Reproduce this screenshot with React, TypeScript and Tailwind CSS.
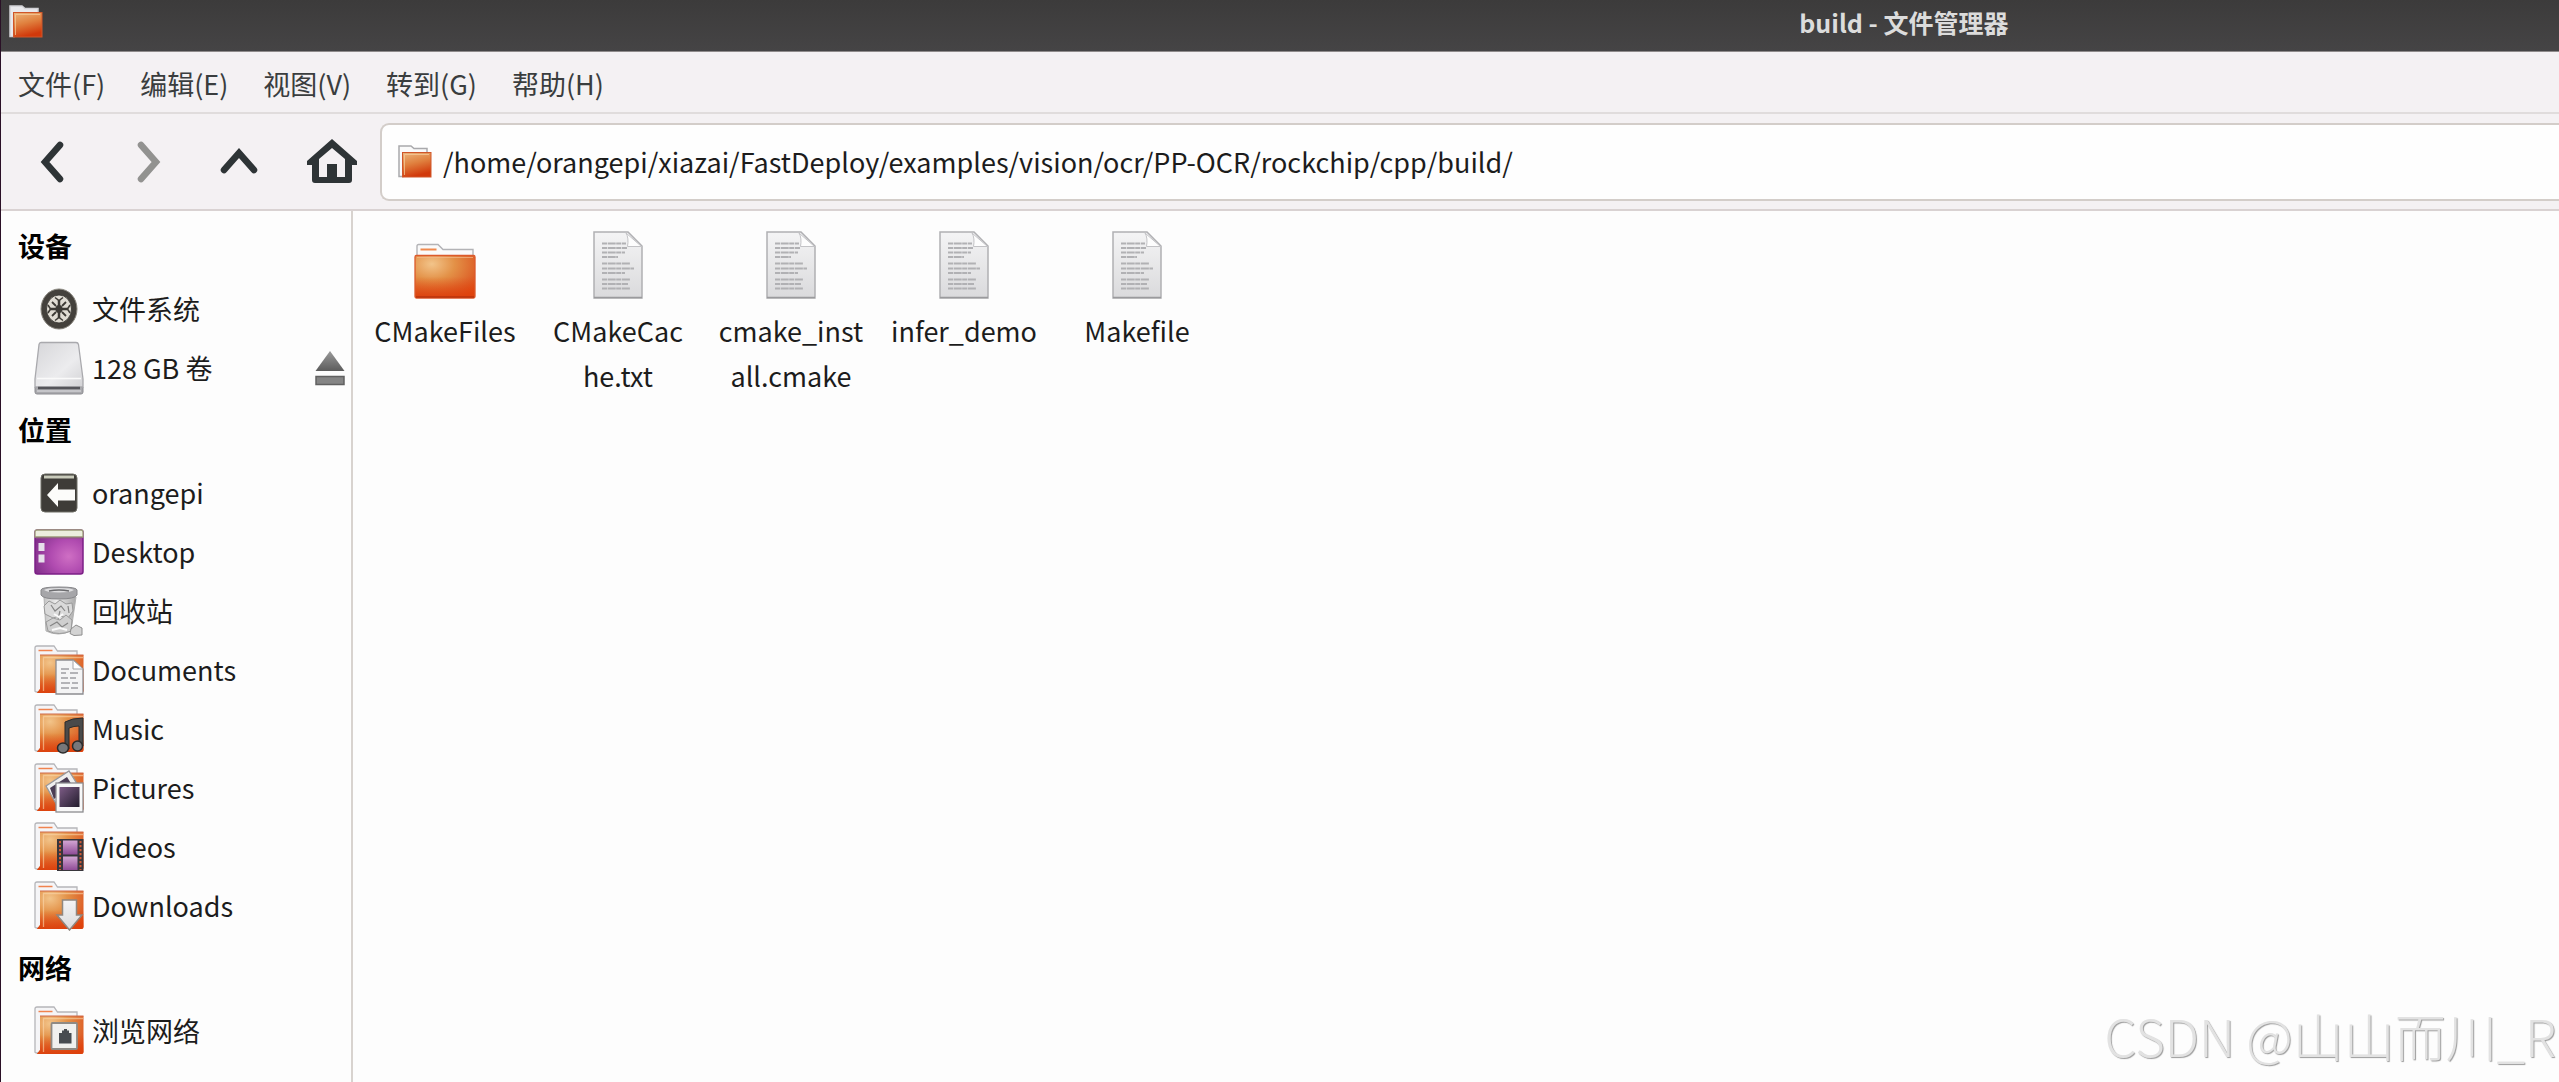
import React from "react";

const FONT = "font-['Noto_Sans_CJK_SC','Noto_Sans',sans-serif]";

function Defs() {
  return (
    <svg width="0" height="0" className="absolute" aria-hidden="true">
      <defs>
        <linearGradient id="small-front" x1="0" y1="0" x2="0.3" y2="1">
          <stop offset="0" stopColor="#ecb57c" />
          <stop offset="0.5" stopColor="#e0813f" />
          <stop offset="1" stopColor="#d1390b" />
        </linearGradient>
        <radialGradient id="front" cx="0.28" cy="0.2" r="0.95">
          <stop offset="0" stopColor="#f2c48a" />
          <stop offset="0.4" stopColor="#e39147" />
          <stop offset="0.8" stopColor="#dd5f27" />
          <stop offset="1" stopColor="#e2470f" />
        </radialGradient>
        <linearGradient id="front-shade" x1="0" y1="0" x2="0" y2="1">
          <stop offset="0.5" stopColor="#e2470f" stopOpacity="0" />
          <stop offset="1" stopColor="#dc400c" stopOpacity="0.9" />
        </linearGradient>
        <linearGradient id="paper" x1="0" y1="0" x2="0" y2="1">
          <stop offset="0" stopColor="#f4f4f5" />
          <stop offset="1" stopColor="#dadadc" />
        </linearGradient>
        <linearGradient id="metal" x1="0" y1="0" x2="1" y2="1">
          <stop offset="0" stopColor="#d6d6d9" />
          <stop offset="0.6" stopColor="#ececee" />
          <stop offset="1" stopColor="#d2d2d5" />
        </linearGradient>
        <linearGradient id="eject" x1="0" y1="0" x2="0" y2="1">
          <stop offset="0" stopColor="#9a9a9a" />
          <stop offset="1" stopColor="#5c5c5c" />
        </linearGradient>
        <radialGradient id="desk" cx="0.7" cy="0.6" r="0.75">
          <stop offset="0" stopColor="#cf6fc4" />
          <stop offset="0.5" stopColor="#b04bb0" />
          <stop offset="1" stopColor="#83308c" />
        </radialGradient>
        <linearGradient id="film" x1="0" y1="0" x2="0" y2="1">
          <stop offset="0" stopColor="#d3a6d4" />
          <stop offset="1" stopColor="#8f4c97" />
        </linearGradient>
        <linearGradient id="photo" x1="0" y1="0" x2="1" y2="1">
          <stop offset="0" stopColor="#7d5c86" />
          <stop offset="1" stopColor="#221c2c" />
        </linearGradient>
        <linearGradient id="glass" x1="0" y1="0" x2="1" y2="0">
          <stop offset="0" stopColor="#c4c4c4" />
          <stop offset="0.4" stopColor="#ececec" />
          <stop offset="1" stopColor="#a9a9a9" />
        </linearGradient>
      </defs>
    </svg>
  );
}

function SmallFolder({ dark = false }: { dark?: boolean }) {
  return (
    <svg viewBox="0 0 34 33" className="h-[33px] w-[34px] shrink-0" aria-hidden="true">
      <path
        d="M1 1h12l3 2.500h13v5H5v23H1z"
        fill={dark ? "#e9e9ec" : "#fafafa"}
        stroke={dark ? "#d2d2d6" : "#a9a9ac"}
        strokeWidth="1.500"
      />
      <rect x="4.500" y="7.500" width="28.500" height="24.500" fill="url(#small-front)" stroke="#d0562a" />
      <path d="M6.500 30V9.500H31" fill="none" stroke="#f6cfa0" strokeOpacity="0.7" />
    </svg>
  );
}

function FolderBase({ children }: { children?: React.ReactNode }) {
  return (
    <svg viewBox="0 0 50 50" className="size-[50px]" aria-hidden="true">
      <path d="M1 46V3q0-2 2-2h17l3.500 5H43v6H7v35H3q-2 0-2-1z" fill="#f5f5f7" stroke="#b5b5b9" strokeWidth="1.300" />
      <path d="M4.500 5.500h14" stroke="#f0834f" strokeWidth="1.500" />
      <path d="M6 10h43.500v36q0 2-2 2H3l3-4z" fill="url(#front)" />
      <path d="M6 10h43.500v36q0 2-2 2H3l3-4z" fill="url(#front-shade)" />
      <path d="M6 10h43.500" stroke="#cf6a4a" />
      <path d="M9.500 46V12.500H49" fill="none" stroke="#fbd9ae" strokeOpacity="0.6" strokeWidth="1.300" />
      {children}
    </svg>
  );
}

function FilesystemIcon() {
  return (
    <svg viewBox="0 0 38 42" className="h-[42px] w-[38px]" aria-hidden="true">
      <ellipse cx="19" cy="21" rx="18" ry="20" fill="#44413c" stroke="#8a877f" strokeWidth="1" />
      <ellipse cx="19" cy="21" rx="12.500" ry="14" fill="#e0dcd3" stroke="#2f2d29" strokeWidth="0.800" />
      <g stroke="#3d3a35">
        <path d="M19 12v18M10 21h18" strokeWidth="2.500" />
        <path d="M12 14l4 4M26 14l-4 4M12 28l4-4M26 28l-4-4" strokeWidth="1.800" />
        <path d="M15 9.500l4 3 4-3M15 32.500l4-3 4 3M8 17l2.500 4L8 25M30 17l-2.500 4 2.500 4" fill="none" strokeWidth="1.500" />
      </g>
      <ellipse cx="19" cy="21" rx="3.500" ry="4" fill="#3d3a35" />
    </svg>
  );
}

function DriveIcon() {
  return (
    <svg viewBox="0 0 50 54" className="h-[54px] w-[50px]" aria-hidden="true">
      <path d="M1 46h48v5q0 2-2 2H3q-2 0-2-2z" fill="#a9a9ad" stroke="#8b8b90" />
      <path d="M7 1.500h35q2 0 2.500 2L49 38v8H1v-8L5 3.500q.4-2 2-2z" fill="url(#metal)" stroke="#a9a9ad" strokeWidth="1.300" />
      <path d="M3 37.500h44" stroke="#fafafa" strokeWidth="1.300" />
      <path d="M4 47h42" stroke="#55555a" strokeWidth="2.500" />
      <path d="M3 50h44" stroke="#cfcfd3" strokeWidth="1.500" />
    </svg>
  );
}

function HomeFolderIcon() {
  return (
    <svg viewBox="0 0 38 40" className="h-[40px] w-[38px]" aria-hidden="true">
      <rect x="1" y="1" width="36" height="38" rx="4" fill="#3e3c38" stroke="#6f6e66" />
      <path d="M4 4h30" stroke="#c9cbbb" strokeWidth="3" />
      <path d="M7 22l11-12v6.500h17v11H18V34z" fill="#fcfcfa" />
    </svg>
  );
}

function DesktopIcon() {
  return (
    <svg viewBox="0 0 50 46" className="h-[46px] w-[50px]" aria-hidden="true">
      <rect x="1" y="1" width="48" height="44" rx="2.500" fill="url(#desk)" stroke="#7c1f86" strokeWidth="1.500" />
      <path d="M1 8V3q0-2 2-2h44q2 0 2 2v5z" fill="#eceedd" stroke="#9b9c78" strokeWidth="1.300" />
      <path d="M2 9h46" stroke="#8c5f7c" />
      <rect x="4.500" y="14" width="6" height="8" fill="#e6dfea" />
      <rect x="4.500" y="25.500" width="6" height="8" fill="#e6dfea" />
    </svg>
  );
}

function TrashIcon() {
  return (
    <svg viewBox="-6 0 50 50" className="size-[50px]" aria-hidden="true">
      <path d="M4 11l2 34q12 6 25 0l5-34z" fill="url(#glass)" stroke="#b2b2b2" />
      <path d="M4 20l5-5 6 3 5-4 6 4 6-1 1 8-5 7-8-2-7 2-8-4z" fill="#dadada" stroke="#999" />
      <path d="M6 36l7-4 7 2 6-5 6 5-1 11q-12 5-23 0z" fill="#cfcfcf" stroke="#9a9a9a" />
      <path d="M11 19l4 6 6-5 4 5M10 40l7-4 5 5 6-4M20 25l-2 8M28 20l1 7" fill="none" stroke="#858585" strokeWidth="1.200" />
      <path d="M14 28l5 3 4-3M12 44l8-2 7 2" fill="none" stroke="#fafafa" strokeWidth="2" />
      <path d="M1 4q0-3 18-3t18 3v5q-2 4-18 4T1 9z" fill="#a6a6a9" stroke="#87878a" />
      <path d="M4 4q2-2 15-2t15 2q-3 2.500-15 2.500T4 4z" fill="#dedee0" />
      <path d="M9 5q10-2 20 0" stroke="#6b6b6e" fill="none" strokeWidth="1.500" />
      <path d="M31 43l5-4 6 3v7l-8 .500-4-2z" fill="#d3d3d3" stroke="#8d8d8d" />
    </svg>
  );
}

function DocumentsIcon() {
  return (
    <FolderBase>
      <path d="M22 15h17l10 9v25H22z" fill="#f4f4f5" stroke="#8c8c90" strokeWidth="1.300" />
      <path d="M39 15v9h10z" fill="#fff" stroke="#a2a2a6" />
      <path d="M27 24h8M27 28h5M36 28h8M27 33h7M36 33h6M27 38h9M38 38h6M27 43h8M37 43h7" stroke="#9d9da2" strokeWidth="1.300" />
    </FolderBase>
  );
}

function MusicIcon() {
  return (
    <FolderBase>
      <path d="M31 18q7-4 18-4v28h-4V22q-5 0-10 2v21h-4z" fill="#4a4a4a" stroke="#2b2b2b" />
      <ellipse cx="29" cy="44" rx="5.500" ry="5" fill="#77777a" stroke="#2b2b2b" strokeWidth="1.500" />
      <ellipse cx="43.500" cy="42" rx="5" ry="5" fill="#77777a" stroke="#2b2b2b" strokeWidth="1.500" />
    </FolderBase>
  );
}

function PicturesIcon() {
  return (
    <FolderBase>
      <path d="M12 23L35 8l10 16-21 20z" fill="#efefef" stroke="#98989c" strokeWidth="1.300" />
      <path d="M16 25l17-11 5 8-18 14z" fill="#4b3d54" />
      <rect x="22" y="20" width="27" height="29" fill="#f8f8f8" stroke="#8c8c90" strokeWidth="1.300" />
      <rect x="25.500" y="24" width="20" height="20" fill="url(#photo)" />
    </FolderBase>
  );
}

function VideosIcon() {
  return (
    <FolderBase>
      <rect x="23" y="17" width="26.500" height="32" fill="#38363c" />
      <rect x="29" y="18.500" width="14.500" height="14" fill="url(#film)" />
      <rect x="29" y="34.500" width="14.500" height="13.500" fill="url(#film)" />
      <path d="M26 19v29M46.500 19v29" stroke="#cf5a35" strokeWidth="2" strokeDasharray="2.200 1.800" />
    </FolderBase>
  );
}

function DownloadsIcon() {
  return (
    <FolderBase>
      <path d="M28.500 19h14v15H48L35.500 49 23 34h5.500z" fill="url(#paper)" stroke="#8f8780" strokeWidth="1.500" />
    </FolderBase>
  );
}

function NetworkIcon() {
  return (
    <FolderBase>
      <rect x="17.500" y="17" width="25.500" height="26" rx="1" fill="#f0f0ee" stroke="#8f8a84" strokeWidth="1.800" />
      <path d="M25 27h3v-2.500h2V23h3v1.500h2V27h2.500v10.500H25z" fill="#474b50" />
    </FolderBase>
  );
}

function BigFolderIcon() {
  return (
    <svg viewBox="0 0 62 56" className="h-[56px] w-[62px]" aria-hidden="true">
      <path d="M3 13V3q0-1.500 1.500-1.500H24L29 6.500h30V14" fill="#fafafa" stroke="#b3b3b6" strokeWidth="1.400" />
      <path d="M6.500 6.500h16" stroke="#f08a4f" strokeWidth="2" />
      <rect x="1" y="12.500" width="60" height="42.500" rx="1.500" fill="url(#front)" />
      <rect x="1" y="12.500" width="60" height="42.500" rx="1.500" fill="url(#front-shade)" stroke="#dc5a2c" strokeWidth="1.300" />
      <path d="M3 14.500h56" stroke="#f3b98d" strokeOpacity="0.7" />
      <path d="M2 54h58" stroke="#b8330d" strokeWidth="1.500" />
    </svg>
  );
}

function TextFileIcon() {
  return (
    <svg viewBox="0 0 50 68" className="h-[68px] w-[50px]" aria-hidden="true">
      <path d="M1 1h34l14 14v52H1z" fill="url(#paper)" stroke="#b0b0b3" strokeWidth="1.500" />
      <path d="M1 66.500h48" stroke="#9a9a9d" strokeWidth="1.500" />
      <path d="M33 2q3 5 1.500 13.500H48.500z" fill="#fdfdfd" stroke="#c3c3c6" />
      <path
        d="M9 12.500h24M9 17h25M9 21.500h23M9 26h16M9 32.500h28M9 37.500h32M9 42h23M9 48.500h28M9 53h26M9 57.500h28"
        stroke="#b1b1b4"
        strokeWidth="1.800"
        strokeDasharray="5 0.700 8 0.500"
      />
    </svg>
  );
}

const menus = ["文件(F)", "编辑(E)", "视图(V)", "转到(G)", "帮助(H)"];

type Place = { label: string; icon: React.ReactNode; eject?: boolean };

const sections: { title: string; places: Place[] }[] = [
  {
    title: "设备",
    places: [
      { label: "文件系统", icon: <FilesystemIcon /> },
      { label: "128 GB 卷", icon: <DriveIcon />, eject: true },
    ],
  },
  {
    title: "位置",
    places: [
      { label: "orangepi", icon: <HomeFolderIcon /> },
      { label: "Desktop", icon: <DesktopIcon /> },
      { label: "回收站", icon: <TrashIcon /> },
      { label: "Documents", icon: <DocumentsIcon /> },
      { label: "Music", icon: <MusicIcon /> },
      { label: "Pictures", icon: <PicturesIcon /> },
      { label: "Videos", icon: <VideosIcon /> },
      { label: "Downloads", icon: <DownloadsIcon /> },
    ],
  },
  { title: "网络", places: [{ label: "浏览网络", icon: <NetworkIcon /> }] },
];

// Each name is given in parts; a long name may wrap between them.
const files: { parts: string[]; folder?: boolean }[] = [
  { parts: ["CMakeFiles"], folder: true },
  { parts: ["CMakeCac", "he.txt"] },
  { parts: ["cmake_inst", "all.cmake"] },
  { parts: ["infer_demo"] },
  { parts: ["Makefile"] },
];

function NavButton({ label, disabled, children }: { label: string; disabled?: boolean; children: React.ReactNode }) {
  return (
    <button
      type="button"
      aria-label={label}
      disabled={disabled}
      className="flex h-full w-[93px] items-center justify-center text-[#2e3436] disabled:text-[#929290]"
    >
      <svg viewBox="0 0 52 46" className="h-[46px] w-[52px]" fill="none" stroke="currentColor" strokeWidth="6.500" aria-hidden="true">
        {children}
      </svg>
    </button>
  );
}

export default function App() {
  return (
    <div className={`${FONT} relative flex min-h-screen flex-col overflow-hidden border-l border-[#2a1026] bg-[#fdfdfd] text-[27px] text-[#1c1c1c]`}>
      <Defs />
      <header className="grid h-[52px] grid-cols-[703fr_297fr] items-center border-b border-[#8f8b8b] bg-linear-to-b from-[#3c3b3b] to-[#454445]">
        <div className="flex pb-2 pl-2">
          <SmallFolder dark />
        </div>
        <h1 className="pb-2 text-[25px] leading-9 font-bold text-[#dcdcdc]">build - 文件管理器</h1>
      </header>

      <nav className="flex h-[62px] items-center gap-[35px] border-b-2 border-[#e0dcdc] bg-[#f4f1f3] pl-[17px] pt-1 text-[#3a3d3e]">
        {menus.map((m) => (
          <button key={m} type="button" className="leading-10">
            {m}
          </button>
        ))}
      </nav>

      <div className="flex h-[97px] items-center border-b-2 border-[#d9d2d2] bg-[#f4f1f3] pl-[5px]">
        <NavButton label="后退">
          <path d="M33 6L18 23l15 17" strokeLinecap="round" />
        </NavButton>
        <NavButton label="前进" disabled>
          <path d="M21 6l15 17-15 17" strokeLinecap="round" />
        </NavButton>
        <NavButton label="上一级">
          <path d="M11 31l15-17 15 17" strokeLinecap="round" />
        </NavButton>
        <NavButton label="主目录">
          <path d="M1 22L26 0l25 22v4h-5v15q0 3-3 3H9q-3 0-3-3V26H1zM13 20v18h8V25h10v13h8V20L26 9z" fill="currentColor" stroke="none" fillRule="evenodd" />
        </NavButton>
        <label className="ml-[2px] flex h-[78px] flex-1 items-center gap-[11px] rounded-l-[9px] border-2 border-r-0 border-[#d3cdc9] bg-[#fefefe] pl-[16px]">
          <SmallFolder />
          <input
            type="text"
            aria-label="位置"
            defaultValue="/home/orangepi/xiazai/FastDeploy/examples/vision/ocr/PP-OCR/rockchip/cpp/build/"
            className="min-w-0 flex-1 bg-transparent leading-10 outline-none"
          />
        </label>
      </div>

      <div className="flex flex-1">
        <aside className="w-[352px] shrink-0 border-r-2 border-[#d8d3cf] pt-[2px]">
          {sections.map((s) => (
            <section key={s.title}>
              <h2 className="flex h-[66px] items-center pl-[17px] font-bold text-black">{s.title}</h2>
              <ul>
                {s.places.map((p) => (
                  <li key={p.label} className="flex h-[59px] items-center justify-between pr-[6px] pl-[33px]">
                    <a href="#" className="flex flex-1 items-center gap-[8px]">
                      <span className="flex w-[50px] justify-center">{p.icon}</span>
                      <span className="leading-10">{p.label}</span>
                    </a>
                    {p.eject && (
                      <button type="button" aria-label="弹出">
                        <svg viewBox="0 0 30 36" className="h-[36px] w-[30px]" aria-hidden="true">
                          <path d="M15 1l14.500 20H.5z" fill="url(#eject)" />
                          <rect x="1" y="26.500" width="28" height="8" fill="#858585" stroke="#616161" strokeWidth="1.500" />
                        </svg>
                      </button>
                    )}
                  </li>
                ))}
              </ul>
            </section>
          ))}
        </aside>

        <main className="flex-1 pt-[18px] pl-[17px]">
          <ul className="flex flex-wrap gap-[23px]">
            {files.map((f) => (
              <li key={f.parts[0]} className="w-[150px]">
                <button type="button" className="flex w-full flex-col items-center">
                  <span className="flex h-[70px] items-end">{f.folder ? <BigFolderIcon /> : <TextFileIcon />}</span>
                  <span className="mt-[9px] w-full text-center leading-[45px]">
                    {f.parts.map((part, i) => (
                      <React.Fragment key={part}>
                        {i > 0 && <wbr />}
                        {part}
                      </React.Fragment>
                    ))}
                  </span>
                </button>
              </li>
            ))}
          </ul>
        </main>
      </div>

      <p className="absolute right-[3px] bottom-[10px] text-[51px] leading-[74px] font-light text-[#e2e2e2] [text-shadow:1px_1px_1px_#9c9c9c]">
        CSDN @山山而川_R
      </p>
    </div>
  );
}
